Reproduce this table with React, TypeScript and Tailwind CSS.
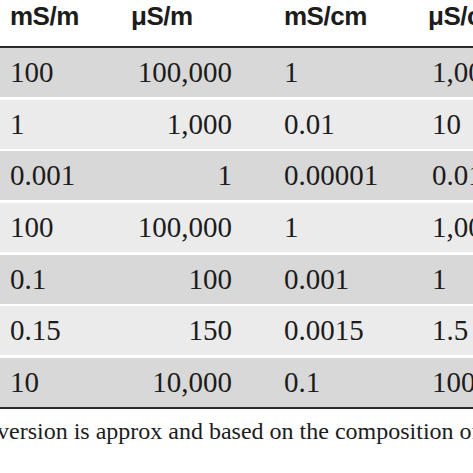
import React from "react";

type Row = [string, string, string, string];

const rows: Row[] = [
  ["100", "100,000", "1", "1,000"],
  ["1", "1,000", "0.01", "10"],
  ["0.001", "1", "0.00001", "0.01"],
  ["100", "100,000", "1", "1,000"],
  ["0.1", "100", "0.001", "1"],
  ["0.15", "150", "0.0015", "1.5"],
  ["10", "10,000", "0.1", "100"],
];

const serif = "font-[family-name:Liberation_Serif,serif]";
const sans = "font-[family-name:Liberation_Sans,sans-serif]";

const App = () => {
  return (
    <div className="w-[473px] h-[473px] overflow-hidden bg-white text-[#1c1c1c]">
      <div className="w-[700px]">
        {/* header */}
        <div className={`grid grid-cols-[120px_122px_180px_200px] h-[46px] ${sans} font-bold text-[26px] leading-none tracking-[-0.5px]`}>
          <div className="pl-[10px] pt-[3px]">mS/m</div>
          <div className="pl-[11px] pt-[3px]">μS/m</div>
          <div className="pl-[42px] pt-[3px]">mS/cm</div>
          <div className="pl-[6px] pt-[3px]">μS/cm</div>
        </div>
        <div className="h-[2px] bg-[#2a2a2a]" />

        {/* body */}
        <div className={`flex flex-col gap-[2.7px] ${serif} text-[29px] leading-none`}>
          {rows.map((r, i) => (
            <div
              key={i}
              className={`grid grid-cols-[120px_122px_180px_200px] h-[49px] items-center ${
                i % 2 === 0 ? "bg-[#d8d8d8]" : "bg-[#ebebeb]"
              }`}
            >
              <div className="pl-[10px]">{r[0]}</div>
              <div className="pr-[10px] text-right">{r[1]}</div>
              <div className="pl-[42px]">{r[2]}</div>
              <div className="pl-[10px]">{r[3]}</div>
            </div>
          ))}
        </div>
        <div className="h-[2px] bg-[#2a2a2a]" />

        {/* footnote */}
        <div className={`${serif} text-[24px] leading-none whitespace-nowrap pt-[10px] -ml-[3px]`}>
          version is approx and based on the composition of the water
        </div>
      </div>
    </div>
  );
};

export default App;
